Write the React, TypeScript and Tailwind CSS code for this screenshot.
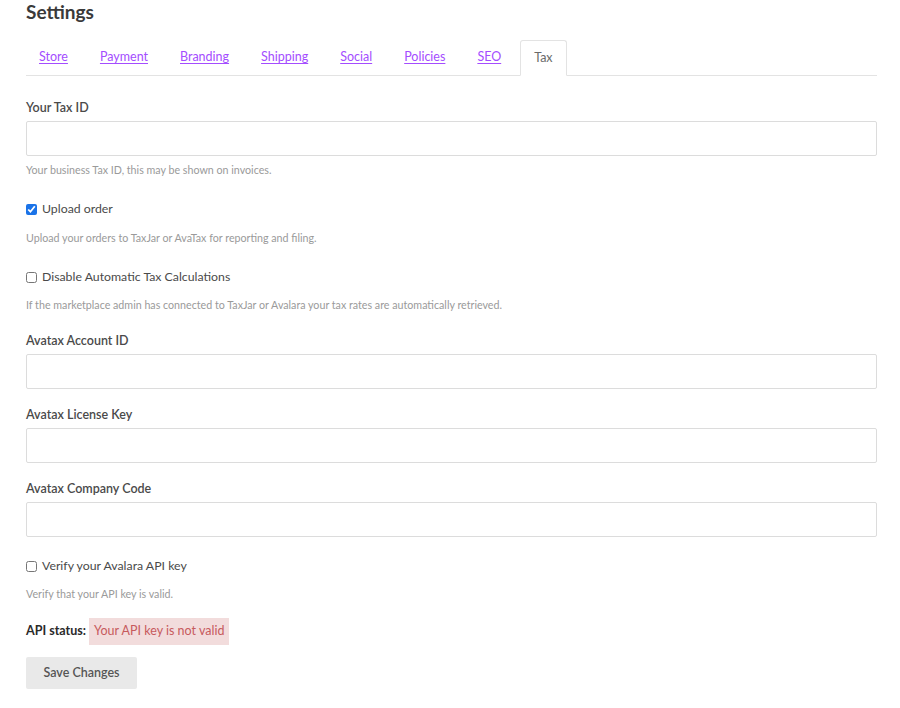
import React from "react"

const tabs = ["Store", "Payment", "Branding", "Shipping", "Social", "Policies", "SEO"]

function Field({ label, top }: { label: string; top: string }) {
  return (
    <div className={top}>
      <label className="block text-[12.5px] leading-[18px] font-semibold text-[#4a4a4a]">{label}</label>
      <input
        type="text"
        className="mt-[4px] block h-[35px] w-full rounded-[2px] border border-[#dcdcdc] bg-white px-2 text-[13px] outline-none"
      />
    </div>
  )
}

function Check({ label, checked, top }: { label: string; checked?: boolean; top: string }) {
  return (
    <label className={`flex items-center gap-[5px] text-[12.3px] leading-[18px] text-[#4a4a4a] ${top}`}>
      <input type="checkbox" defaultChecked={checked} className="m-0 h-[11px] w-[11px] accent-[#1a73e8]" />
      <span>{label}</span>
    </label>
  )
}

function Help({ children, top }: { children: React.ReactNode; top: string }) {
  return <p className={`text-[10.7px] leading-[16px] text-[#9a9a9a] ${top}`}>{children}</p>
}

export default function App() {
  return (
    <main className="min-h-screen bg-white px-[26px] pr-[23px]" style={{ fontFamily: "Lato, 'Noto Sans', sans-serif" }}>
      {/* Header */}
      <h1 className="text-[19px] leading-[24px] font-bold text-[#3a3a3a]">Settings</h1>

      {/* Tabs */}
      <nav className="mt-[16px] flex items-end gap-[6px] border-b border-[#e3e3e3]">
        {tabs.map((t) => (
          <a
            key={t}
            href="#"
            className="flex h-[35px] items-center px-[13px] text-[12.5px] text-[#a44dff] underline underline-offset-2"
          >
            {t}
          </a>
        ))}
        <span className="-mb-px flex h-[36px] items-center rounded-t-[3px] border border-b-white border-[#e3e3e3] bg-white px-[13px] text-[12.5px] text-[#6a6a6a]">
          Tax
        </span>
      </nav>

      {/* Form */}
      <Field label="Your Tax ID" top="mt-[23px]" />
      <Help top="mt-[6px]">Your business Tax ID, this may be shown on invoices.</Help>

      <Check label="Upload order" checked top="mt-[22px]" />
      <Help top="mt-[12px]">Upload your orders to TaxJar or AvaTax for reporting and filing.</Help>

      <Check label="Disable Automatic Tax Calculations" top="mt-[22px]" />
      <Help top="mt-[11px]">
        If the marketplace admin has connected to TaxJar or Avalara your tax rates are automatically retrieved.
      </Help>

      <Field label="Avatax Account ID" top="mt-[19px]" />
      <Field label="Avatax License Key" top="mt-[17px]" />
      <Field label="Avatax Company Code" top="mt-[17px]" />

      <Check label="Verify your Avalara API key" top="mt-[20px]" />
      <Help top="mt-[11px]">Verify that your API key is valid.</Help>

      <div className="mt-[16px] flex items-center gap-[3px]">
        <span className="text-[12.5px] font-bold text-[#2a2a2a]">API status:</span>
        <span className="flex h-[27px] items-center bg-[#f2dcdc] px-[5px] text-[12.5px] text-[#c75a5c]">
          Your API key is not valid
        </span>
      </div>

      <button className="mt-[12px] h-[32px] w-[111px] rounded-[2px] bg-[#e9e9e9] text-[12.5px] font-semibold text-[#555]">
        Save Changes
      </button>
    </main>
  )
}
